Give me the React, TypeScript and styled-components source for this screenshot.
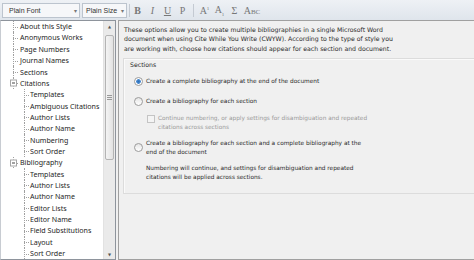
import { FC } from 'react';
import styled, { createGlobalStyle } from 'styled-components';

const GlobalStyle = createGlobalStyle`
  html, body {
    margin: 0;
    padding: 0;
    width: 474px;
    height: 260px;
    overflow: hidden;
    background: #f0f0f0;
  }
`;

type TreeItem = { label: string; level: 0 | 1; toggle?: boolean };

const treeItems: TreeItem[] = [
  { label: 'About this Style', level: 0 },
  { label: 'Anonymous Works', level: 0 },
  { label: 'Page Numbers', level: 0 },
  { label: 'Journal Names', level: 0 },
  { label: 'Sections', level: 0 },
  { label: 'Citations', level: 0, toggle: true },
  { label: 'Templates', level: 1 },
  { label: 'Ambiguous Citations', level: 1 },
  { label: 'Author Lists', level: 1 },
  { label: 'Author Name', level: 1 },
  { label: 'Numbering', level: 1 },
  { label: 'Sort Order', level: 1 },
  { label: 'Bibliography', level: 0, toggle: true },
  { label: 'Templates', level: 1 },
  { label: 'Author Lists', level: 1 },
  { label: 'Author Name', level: 1 },
  { label: 'Editor Lists', level: 1 },
  { label: 'Editor Name', level: 1 },
  { label: 'Field Substitutions', level: 1 },
  { label: 'Layout', level: 1 },
  { label: 'Sort Order', level: 1 },
];

const App: FC = () => {
  return (
    <>
      <GlobalStyle />
      <Window>
        <Toolbar>
          <Select $width={78}>
            <span>Plain Font</span>
            <Caret>▾</Caret>
          </Select>
          <Select $width={45} $tight>
            <span>Plain Size</span>
            <Caret>▾</Caret>
          </Select>
          <Separator $first />
          <ToolButton $bold>B</ToolButton>
          <ToolButton $italic>I</ToolButton>
          <ToolButton $underline>U</ToolButton>
          <ToolButton>P</ToolButton>
          <Separator />
          <ToolButton>
            A<Sup>1</Sup>
          </ToolButton>
          <ToolButton>
            A<Sub>1</Sub>
          </ToolButton>
          <ToolButton>Σ</ToolButton>
          <ToolButton $wide>
            A<SmallCaps>BC</SmallCaps>
          </ToolButton>
        </Toolbar>

        <Body>
          <TreeBox>
            <TreeList>
              {treeItems.map((item, i) => (
                <TreeRow key={i} $level={item.level}>
                  {item.toggle && <Toggle />}
                  <TreeLabel>{item.label}</TreeLabel>
                </TreeRow>
              ))}
            </TreeList>
            <ScrollBar>
              <Arrow>▲</Arrow>
              <Track>
                <Thumb>
                  <Grip />
                </Thumb>
              </Track>
              <Arrow>▼</Arrow>
            </ScrollBar>
          </TreeBox>

          <Content>
            <Intro>
              These options allow you to create multiple bibliographies in a single Microsoft Word
              <br />
              document when using Cite While You Write (CWYW). According to the type of style you
              <br />
              are working with, choose how citations should appear for each section and document.
            </Intro>

            <Group>
              <GroupTitle>Sections</GroupTitle>
              <Option $top={8}>
                <Radio $checked />
                <OptionText>Create a complete bibliography at the end of the document</OptionText>
              </Option>
              <Option $top={11}>
                <Radio />
                <OptionText>Create a bibliography for each section</OptionText>
              </Option>
              <SubOption>
                <Checkbox />
                <OptionText $disabled>
                  Continue numbering, or apply settings for disambiguation and repeated
                  <br />
                  citations across sections
                </OptionText>
              </SubOption>
              <Option $top={7} $center>
                <Radio />
                <OptionText>
                  Create a bibliography for each section and a complete bibliography at the
                  <br />
                  end of the document
                </OptionText>
              </Option>
              <Note>
                Numbering will continue, and settings for disambiguation and repeated
                <br />
                citations will be applied across sections.
              </Note>
            </Group>
          </Content>
        </Body>
      </Window>
    </>
  );
};

export default App;

const Window = styled.div`
  width: 474px;
  height: 260px;
  display: flex;
  flex-direction: column;
  background: #f0f0f0;
`;

const Toolbar = styled.div`
  height: 20px;
  flex: none;
  display: flex;
  align-items: center;
  padding-left: 2px;
  box-sizing: border-box;
  background: linear-gradient(#eef1f5, #dfe5ec);
`;

const Select = styled.div<{ $width: number; $tight?: boolean }>`
  width: ${({ $width }) => $width}px;
  height: 15px;
  box-sizing: border-box;
  margin-right: 2px;
  border: 1px solid #bcc4ce;
  background: #f6f7f9;
  display: flex;
  align-items: center;
  justify-content: space-between;
  padding: ${({ $tight }) => ($tight ? '0 2px 0 3px' : '0 2px 0 6px')};
  white-space: nowrap;
  font-family: 'Liberation Sans', Arial, sans-serif;
  font-size: 7px;
  color: #333;
`;

const Caret = styled.span`
  font-size: 6px;
  color: #777;
`;

const Separator = styled.div<{ $first?: boolean }>`
  width: 1px;
  height: 13px;
  background: #c4cad2;
  margin: ${({ $first }) => ($first ? '0' : '0 3px')};
`;

const ToolButton = styled.div<{
  $bold?: boolean;
  $italic?: boolean;
  $underline?: boolean;
  $wide?: boolean;
}>`
  width: ${({ $wide }) => ($wide ? 20 : 15)}px;
  text-align: center;
  font-family: 'Liberation Serif', 'Times New Roman', serif;
  font-size: 10px;
  color: #777;
  font-weight: ${({ $bold }) => ($bold ? 700 : 400)};
  font-style: ${({ $italic }) => ($italic ? 'italic' : 'normal')};
  text-decoration: ${({ $underline }) => ($underline ? 'underline' : 'none')};
`;

const Sup = styled.sup`
  font-size: 5px;
`;

const Sub = styled.sub`
  font-size: 5px;
`;

const SmallCaps = styled.span`
  font-size: 7px;
`;

const Body = styled.div`
  flex: 1;
  display: flex;
  min-height: 0;
`;

const TreeBox = styled.div`
  width: 116px;
  flex: none;
  box-sizing: border-box;
  border: 1px solid #8e949c;
  border-left-color: #c8ccd2;
  background: #fff;
  display: flex;
`;

const TreeList = styled.div`
  flex: 1;
  overflow: hidden;
`;

const TreeRow = styled.div<{ $level: 0 | 1 }>`
  position: relative;
  height: 11.35px;
  display: flex;
  align-items: center;
  padding-left: ${({ $level }) => ($level === 0 ? 19 : 29)}px;
  font-family: 'Noto Sans', 'Open Sans', sans-serif;
  font-size: 7.1px;
  color: #1e1e1e;
  white-space: nowrap;

  &::before {
    content: '';
    position: absolute;
    top: 50%;
    left: ${({ $level }) => ($level === 0 ? 12 : 23)}px;
    width: 5px;
    border-top: 1px dotted #a0a0a0;
  }

  &::after {
    content: '';
    position: absolute;
    top: 0;
    bottom: 0;
    left: ${({ $level }) => ($level === 0 ? 12 : 23)}px;
    border-left: 1px dotted #a0a0a0;
  }
`;

const Toggle = styled.span`
  position: absolute;
  left: 9px;
  top: 50%;
  transform: translateY(-50%);
  width: 7px;
  height: 7px;
  box-sizing: border-box;
  border: 1px solid #a6a6a6;
  background: #fff;
  z-index: 1;
  display: flex;
  align-items: center;
  justify-content: center;

  &::after {
    content: '';
    width: 3px;
    border-top: 1px solid #444;
  }
`;

const TreeLabel = styled.span`
  line-height: 1;
`;

const ScrollBar = styled.div`
  width: 11px;
  flex: none;
  display: flex;
  flex-direction: column;
  background: #eaeaea;
  border-left: 1px solid #e2e2e2;
`;

const Arrow = styled.div`
  height: 10px;
  flex: none;
  display: flex;
  align-items: center;
  justify-content: center;
  font-size: 4px;
  color: #555;
  font-family: 'DejaVu Sans', sans-serif;
`;

const Track = styled.div`
  flex: 1;
  padding-top: 4px;
`;

const Thumb = styled.div`
  height: 125px;
  margin: 0 1px;
  box-sizing: border-box;
  border: 1px solid #b4b4b4;
  border-radius: 2px;
  background: linear-gradient(90deg, #f4f4f4, #e2e2e2);
  display: flex;
  align-items: center;
  justify-content: center;
`;

const Grip = styled.div`
  width: 5px;
  height: 5px;
  border-top: 1px solid #999;
  border-bottom: 1px solid #999;
  box-sizing: border-box;
  position: relative;

  &::after {
    content: '';
    position: absolute;
    left: 0;
    right: 0;
    top: 1px;
    border-top: 1px solid #999;
  }
`;

const Content = styled.div`
  flex: 1;
  margin-left: 2px;
  box-sizing: border-box;
  border: 1px solid #a0a0a0;
  border-right: none;
  background: #f0f0f0;
  padding: 4px 0 0 5px;
  font-family: 'DejaVu Sans', Tahoma, sans-serif;
  color: #2a2a2a;
`;

const Intro = styled.p`
  margin: 0;
  font-size: 6.2px;
  line-height: 9.3px;
`;

const Group = styled.div`
  margin: 5px 0 0 -1px;
  height: 136px;
  box-sizing: border-box;
  border: 1px solid #dcdcdc;
  border-right: none;
  box-shadow: inset 1px 1px 0 #fafafa;
  padding: 1px 0 0 6px;
`;

const GroupTitle = styled.div`
  font-size: 6.2px;
  line-height: 9px;
`;

const Option = styled.div<{ $top: number; $center?: boolean }>`
  display: flex;
  align-items: ${({ $center }) => ($center ? 'center' : 'flex-start')};
  margin-top: ${({ $top }) => $top}px;
  padding-left: 4px;
`;

const SubOption = styled.div`
  display: flex;
  align-items: flex-start;
  margin-top: 8px;
  padding-left: 17px;
`;

const Radio = styled.span<{ $checked?: boolean }>`
  width: 9px;
  height: 9px;
  flex: none;
  box-sizing: border-box;
  border-radius: 50%;
  border: 1px solid #9c9c9c;
  background: ${({ $checked }) =>
    $checked
      ? 'radial-gradient(circle, #2a6fb8 0, #4a8ad0 2px, #fff 2.6px)'
      : 'linear-gradient(#e6e6e6, #fff)'};
  margin-right: 3px;
`;

const Checkbox = styled.span`
  width: 8px;
  height: 8px;
  flex: none;
  box-sizing: border-box;
  border: 1px solid #c4c4c4;
  background: #f4f4f4;
  margin: 1px 3px 0 0;
`;

const OptionText = styled.div<{ $disabled?: boolean }>`
  font-size: 5.8px;
  line-height: 9px;
  color: ${({ $disabled }) => ($disabled ? '#9a9a9a' : '#2a2a2a')};
`;

const Note = styled.div`
  margin: 7px 0 0 16px;
  font-size: 5.8px;
  line-height: 9px;
`;
